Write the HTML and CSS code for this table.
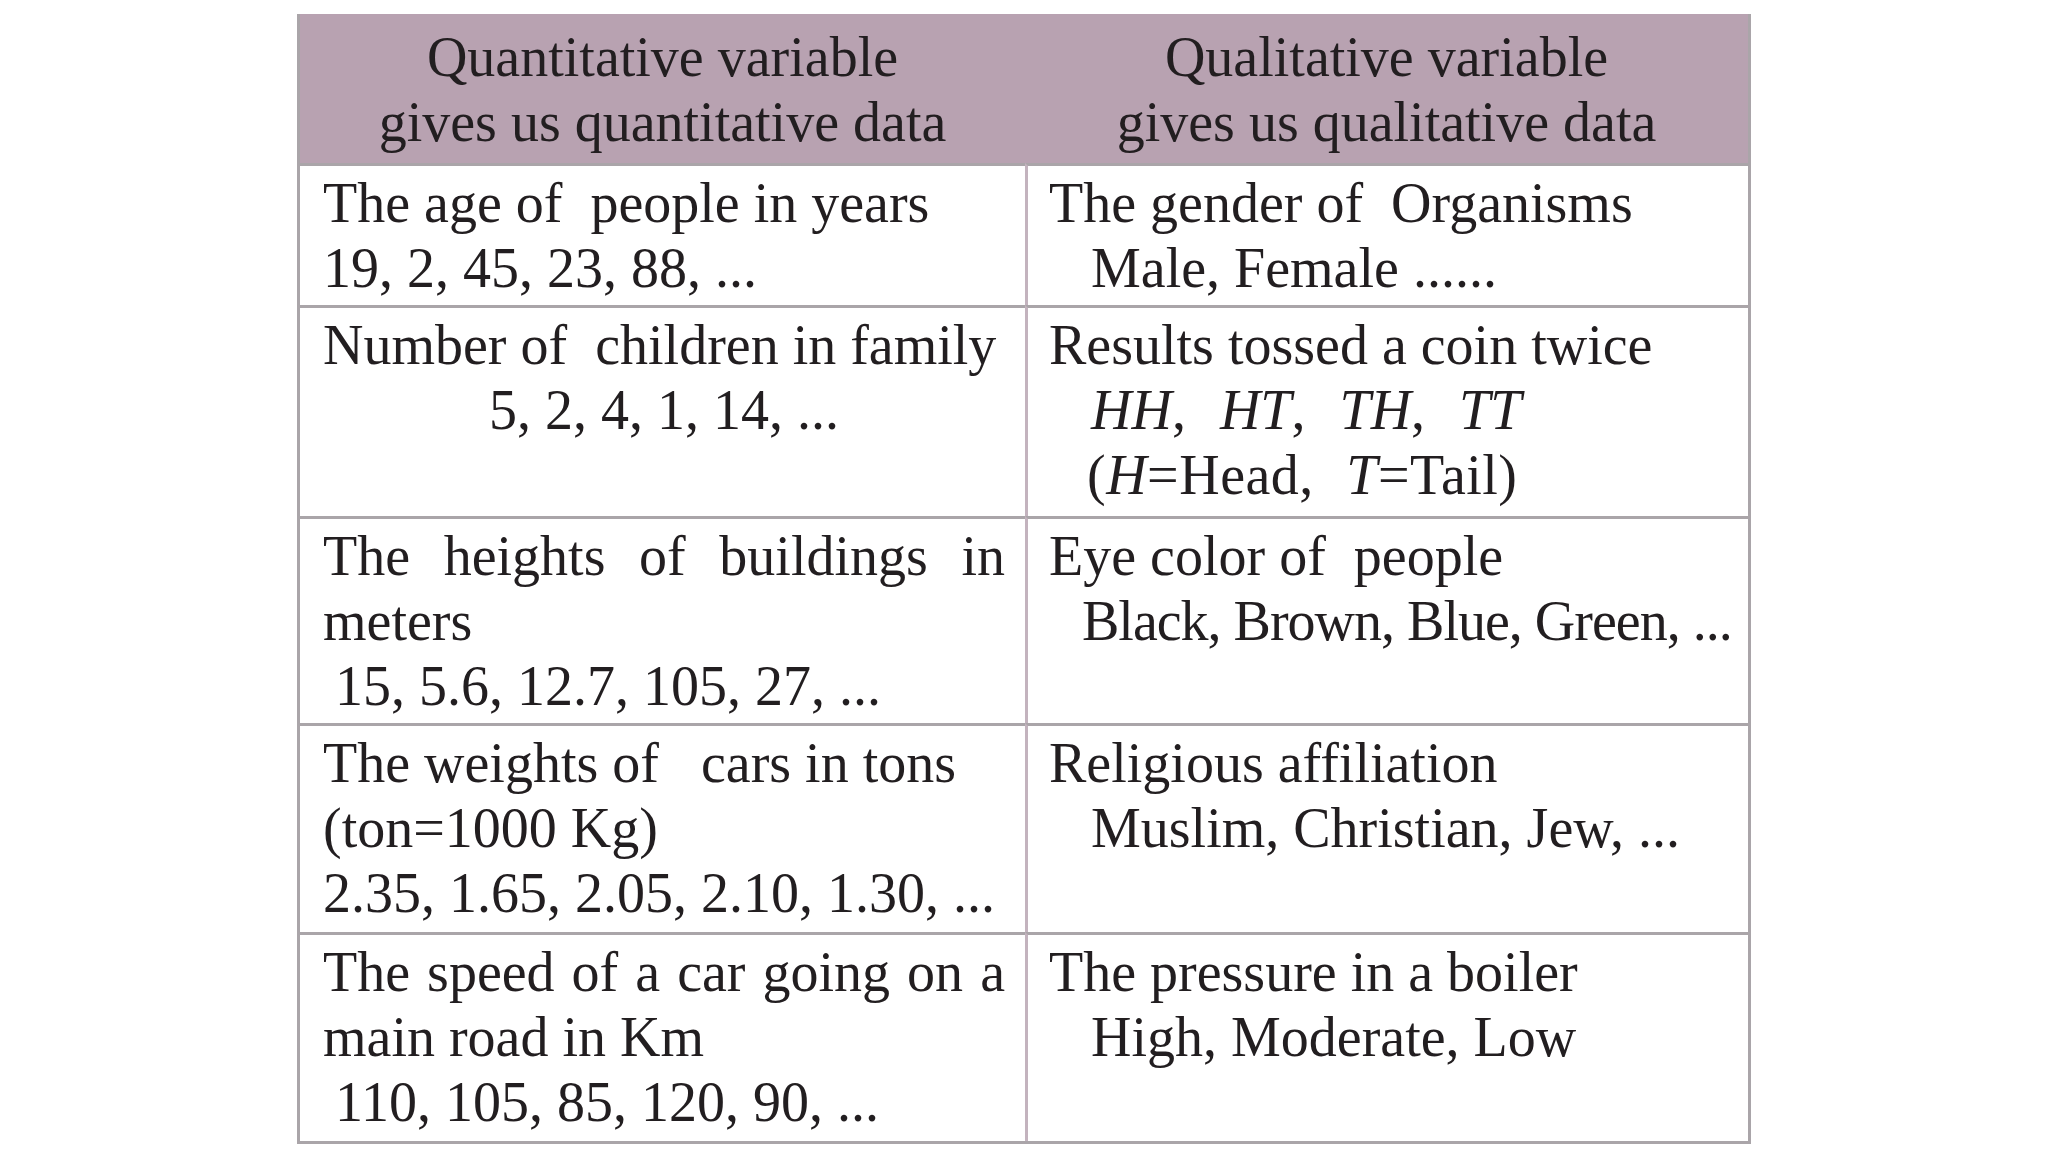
FILE: index.html
```html
<!DOCTYPE html>
<html lang="en">
<head>
<meta charset="utf-8">
<title>Quantitative and qualitative variables</title>
<link rel="stylesheet" href="styles.css">
</head>
<body>
<div class="table">
  <div class="cell head">
    <div class="line">Quantitative variable</div>
    <div class="line">gives us quantitative data</div>
  </div>
  <div class="cell head right">
    <div class="line">Qualitative variable</div>
    <div class="line">gives us qualitative data</div>
  </div>

  <div class="cell body r1">
    <div class="line">The age of&nbsp; people in years</div>
    <div class="line">19, 2, 45, 23, 88, ...</div>
  </div>
  <div class="cell body right r1">
    <div class="line">The gender of&nbsp; Organisms</div>
    <div class="line ind">Male, Female ......</div>
  </div>

  <div class="cell body r2">
    <div class="line">Number of&nbsp; children in family</div>
    <div class="line center">5, 2, 4, 1, 14, ...</div>
  </div>
  <div class="cell body right r2">
    <div class="line">Results tossed a coin twice</div>
    <div class="line ind wide"><i>HH</i>, <i>HT</i>, <i>TH</i>, <i>TT</i></div>
    <div class="line ind-s wide-s">(<i>H</i>=Head, <i>T</i>=Tail)</div>
  </div>

  <div class="cell body r3">
    <div class="line just">The heights of buildings in</div>
    <div class="line">meters</div>
    <div class="line ind-n">15, 5.6, 12.7, 105, 27, ...</div>
  </div>
  <div class="cell body right r3">
    <div class="line">Eye color of&nbsp; people</div>
    <div class="line ind-b tight">Black, Brown, Blue, Green, ...</div>
  </div>

  <div class="cell body r4">
    <div class="line">The weights of&nbsp;&nbsp; cars in tons</div>
    <div class="line">(ton=1000 Kg)</div>
    <div class="line">2.35, 1.65, 2.05, 2.10, 1.30, ...</div>
  </div>
  <div class="cell body right r4">
    <div class="line">Religious affiliation</div>
    <div class="line ind">Muslim, Christian, Jew, ...</div>
  </div>

  <div class="cell body r5">
    <div class="line just">The speed of a car going on a</div>
    <div class="line">main road in Km</div>
    <div class="line ind-n">110, 105, 85, 120, 90, ...</div>
  </div>
  <div class="cell body right r5">
    <div class="line">The pressure in a boiler</div>
    <div class="line ind">High, Moderate, Low</div>
  </div>
</div>
</body>
</html>
```

FILE: styles.css
```css
html, body {
  margin: 0;
  padding: 0;
  background: #ffffff;
}

body {
  font-family: "Liberation Serif", "Times New Roman", serif;
  color: #221e20;
}

.table {
  width: 1454px;
  margin: 14px auto 0;
  box-sizing: border-box;
  border: 3px solid #aaa5a9;
  border-top: none;
  display: grid;
  grid-template-columns: 725px minmax(0, 1fr);
  grid-template-rows: 149px 142px 211px 207px 209px 209px;
}

.cell {
  box-sizing: border-box;
  font-size: 56px;
  line-height: 65px;
  min-width: 0;
}

.head {
  background: #b8a2b1;
  text-align: center;
  padding-top: 11px;
}

.body {
  background: #ffffff;
  border-top: 3px solid #aaa5a9;
  padding: 5px 20px 0 23px;
}

.body.right {
  border-left: 3px solid #c3b3be;
  padding-left: 21px;
}

.line {
  white-space: nowrap;
}

.just {
  text-align: justify;
  text-align-last: justify;
  white-space: normal;
}

.center {
  text-align: center;
}

.ind {
  padding-left: 42px;
}

.ind-s {
  padding-left: 38px;
}

.ind-b {
  padding-left: 33px;
}

.ind-n {
  padding-left: 12px;
}

.wide {
  word-spacing: 20px;
}

.wide-s {
  word-spacing: 18px;
  letter-spacing: 0.5px;
}

.tight {
  letter-spacing: -1px;
}
```
